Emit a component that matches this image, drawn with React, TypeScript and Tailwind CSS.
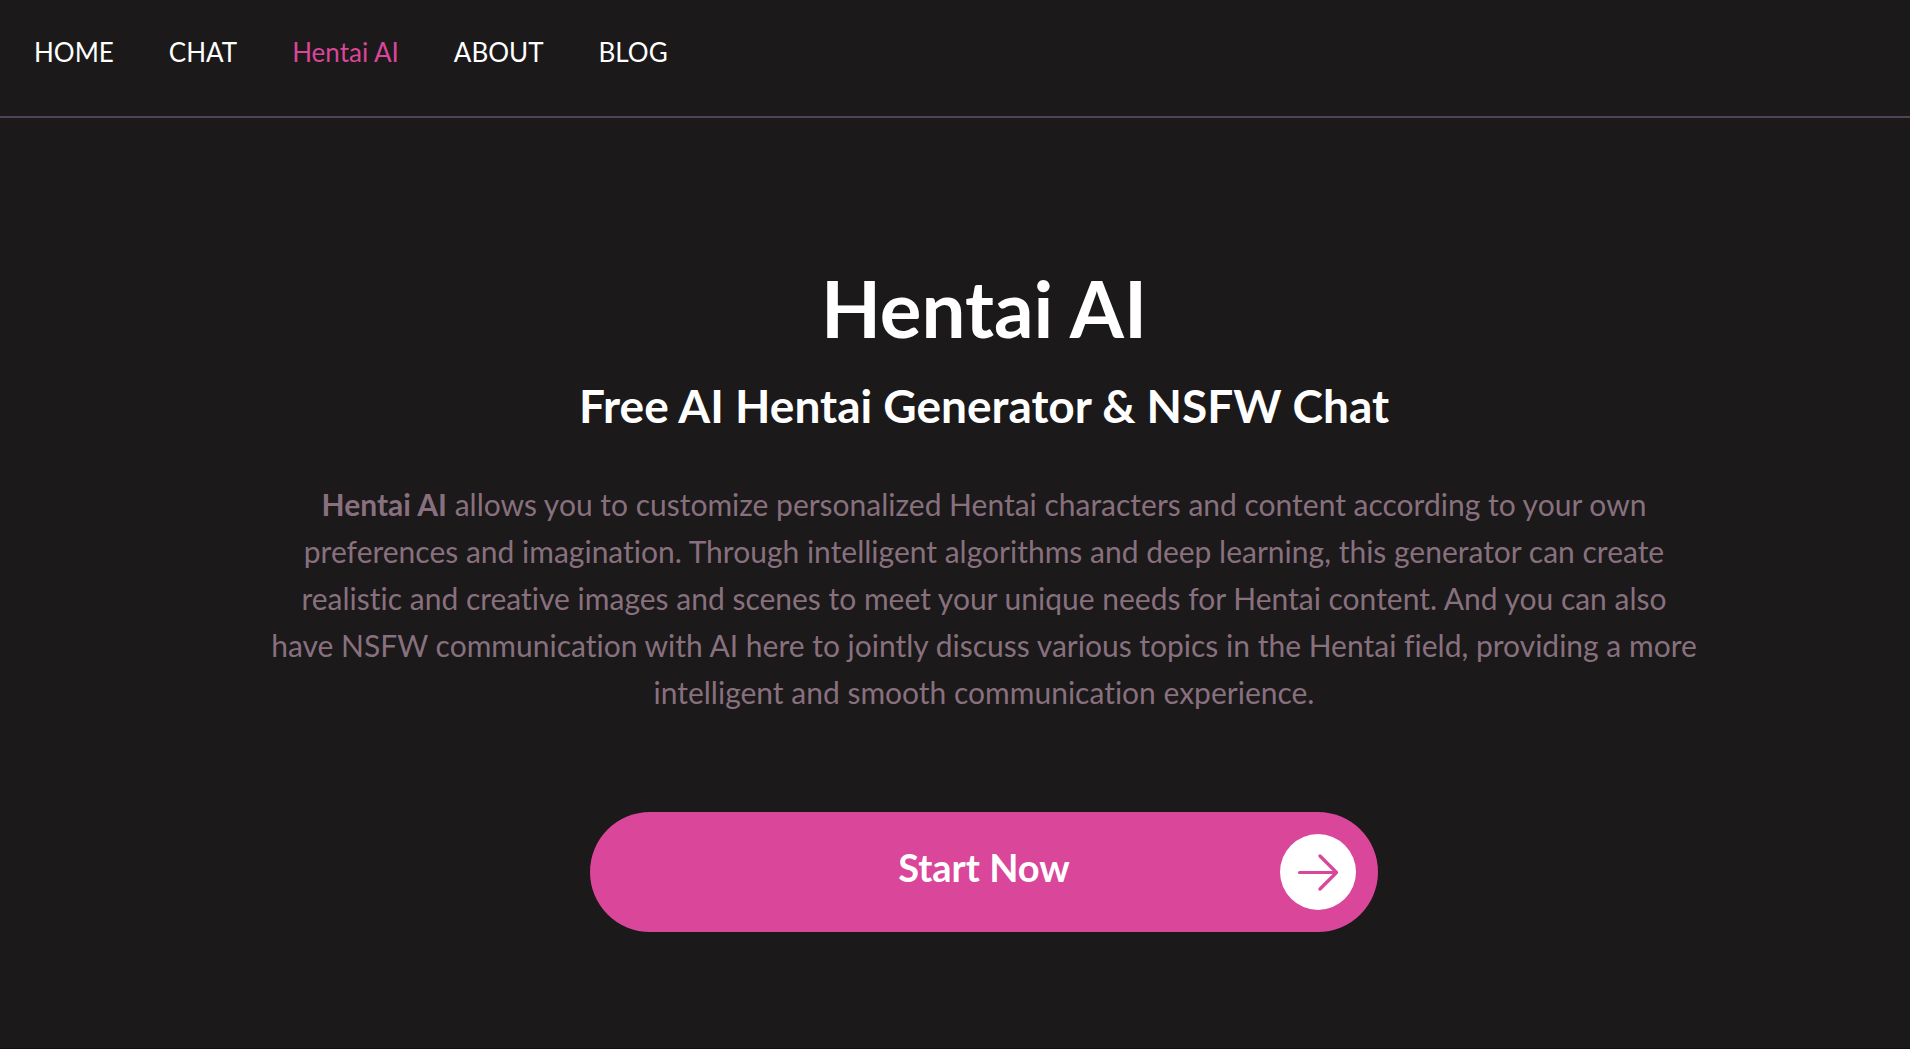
type NavItem = {
  label: string;
  href: string;
  active?: boolean;
};

const NAV_ITEMS: NavItem[] = [
  { label: "HOME", href: "#home" },
  { label: "CHAT", href: "#chat" },
  { label: "Hentai AI", href: "#hentai-ai", active: true },
  { label: "ABOUT", href: "#about" },
  { label: "BLOG", href: "#blog" }
];

function SiteHeader() {
  return (
    <header className="border-b-2 border-[#4f4457] px-[34px] pt-8 pb-11">
      <nav aria-label="Main" className="flex items-center gap-[55px]">
        {NAV_ITEMS.map((item) => (
          <a
            key={item.href}
            href={item.href}
            aria-current={item.active ? "page" : undefined}
            className={
              item.active
                ? "text-[26px] leading-10 text-[#d9469a]"
                : "text-[26px] leading-10 text-white"
            }
          >
            {item.label}
          </a>
        ))}
      </nav>
    </header>
  );
}

/** Pill CTA: centred label, white disc with an arrow on the right edge. */
function StartButton() {
  return (
    <button
      type="button"
      className="grid h-[120px] w-full max-w-[788px] grid-cols-[76px_1fr_76px] items-center rounded-full bg-[#d9469a] px-[22px] text-white"
    >
      <span className="col-start-2 pb-2.5 text-[38px] leading-12 font-bold">
        Start Now
      </span>
      <span className="flex size-[76px] items-center justify-center rounded-full bg-white text-[#d9469a]">
        <svg
          aria-hidden="true"
          width="42"
          height="38"
          viewBox="0 0 42 38"
          fill="none"
          stroke="currentColor"
          strokeWidth="3.2"
          strokeLinecap="round"
          strokeLinejoin="round"
        >
          <path d="M2.5 19.5H39M23 3L39.5 19.5L23 36" />
        </svg>
      </span>
    </button>
  );
}

export default function App() {
  return (
    <div className="flex min-h-screen flex-col border-b border-[#1a0b16] bg-[#1b1919] font-['Lato',sans-serif] [font-variant-ligatures:no-common-ligatures]">
      <SiteHeader />

      <main className="flex flex-col items-center pt-[142px] pr-0 pb-16 pl-[58px] text-center">
        <h1 className="text-[78px] leading-[96px] font-bold text-white">
          Hentai AI
        </h1>

        <h2 className="mt-[22px] text-[46px] leading-[56px] font-bold text-white">
          Free AI Hentai Generator &amp; NSFW Chat
        </h2>

        <p className="mt-[47px] max-w-[1430px] text-[30px] leading-[47px] text-[#88707f]">
          <strong className="font-bold">Hentai AI</strong> allows you to
          customize personalized Hentai characters and content according to your
          own preferences and imagination. Through intelligent algorithms and
          deep learning, this generator can create realistic and creative images
          and scenes to meet your unique needs for Hentai content. And you can
          also have NSFW communication with AI here to jointly discuss various
          topics in the Hentai field, providing a more intelligent and smooth
          communication experience.
        </p>

        <div className="mt-24 flex w-full justify-center">
          <StartButton />
        </div>
      </main>
    </div>
  );
}
